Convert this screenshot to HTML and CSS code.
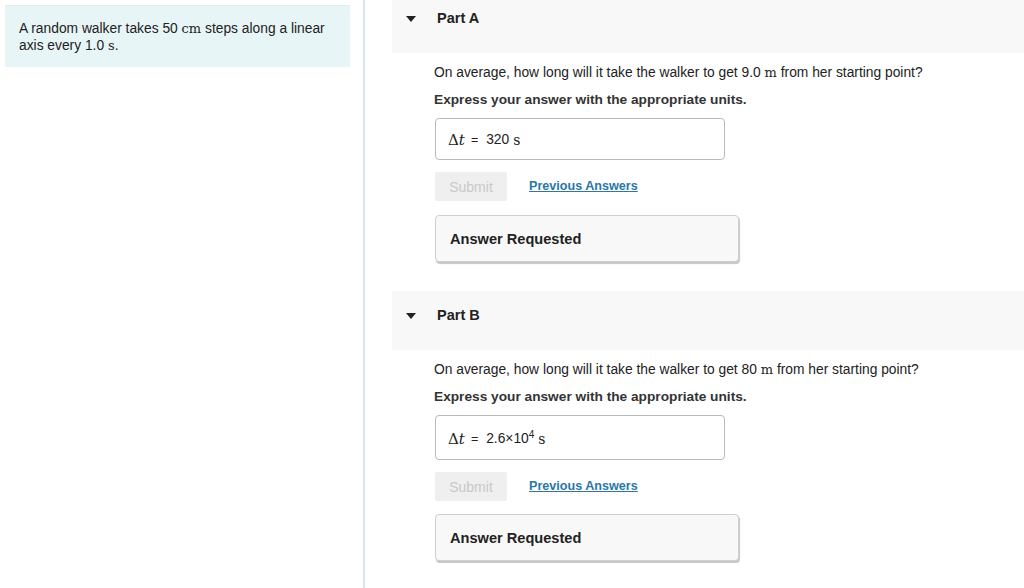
FILE: index.html
```html
<!DOCTYPE html>
<html>
<head>
<meta charset="utf-8">
<link rel="stylesheet" href="styles.css">
</head>
<body>
<div class="page">
  <aside class="left">
    <div class="intro">A random walker takes 50 <span class="mu">cm</span> steps along a linear axis every 1.0 <span class="mu">s</span>.</div>
  </aside>
  <div class="divider"></div>
  <main class="right">
    <section class="part first">
      <div class="part-head">
        <span class="tri"></span>
        <span class="part-title">Part A</span>
      </div>
      <div class="part-body">
        <p class="q">On average, how long will it take the walker to get 9.0 <span class="mu">m</span> from her starting point?</p>
        <p class="instr">Express your answer with the appropriate units.</p>
        <div class="answer-box">
          <span class="delta">Δ<i>t</i></span><span class="eq">=</span><span class="val">320</span><span class="unit">s</span>
        </div>
        <div class="actions">
          <span class="submit">Submit</span>
          <a class="prev">Previous Answers</a>
        </div>
        <div class="requested">Answer Requested</div>
      </div>
    </section>
    <section class="part">
      <div class="part-head">
        <span class="tri"></span>
        <span class="part-title">Part B</span>
      </div>
      <div class="part-body">
        <p class="q">On average, how long will it take the walker to get 80 <span class="mu">m</span> from her starting point?</p>
        <p class="instr">Express your answer with the appropriate units.</p>
        <div class="answer-box tall">
          <span class="delta">Δ<i>t</i></span><span class="eq">=</span><span class="val">2.6×10<sup>4</sup></span><span class="unit">s</span>
        </div>
        <div class="actions">
          <span class="submit">Submit</span>
          <a class="prev">Previous Answers</a>
        </div>
        <div class="requested last">Answer Requested</div>
      </div>
    </section>
  </main>
</div>
</body>
</html>
```
FILE: styles.css
```css
html, body {
  margin: 0;
  padding: 0;
  background: #fff;
}
body {
  font-family: "Liberation Sans", Arial, sans-serif;
  color: #222;
  font-size: 13.8px;
  overflow: hidden;
}
.page {
  display: flex;
  height: 588px;
}
.left {
  width: 363px;
  flex: none;
  padding: 5px 13px 0 5px;
  box-sizing: border-box;
}
.intro {
  background: #e8f5f6;
  border-top: 1px solid #e4eaeb;
  height: 62px;
  box-sizing: border-box;
  padding: 14px 14px 0 14px;
  line-height: 17px;
  font-size: 13.8px;
  color: #222;
}
.mu {
  font-family: "DejaVu Serif", "Liberation Serif", serif;
  font-size: 13px;
}
.divider {
  width: 2px;
  flex: none;
  background: #dde3ec;
}
.right {
  flex: 1;
  padding-left: 27px;
}
.part.first {
  margin-top: -6px;
}
.part-head {
  background: #f8f8f8;
  height: 59px;
  display: flex;
  align-items: flex-start;
  padding-top: 16px;
  box-sizing: border-box;
}
.tri {
  width: 0;
  height: 0;
  border-left: 5px solid transparent;
  border-right: 5px solid transparent;
  border-top: 6px solid #222;
  margin: 6px 0 0 14px;
}
.part-title {
  font-weight: bold;
  font-size: 14.5px;
  margin-left: 21px;
  line-height: 17px;
  color: #222;
}
.part-body {
  padding: 11px 0 29px 42px;
}
.q {
  margin: 0;
  line-height: 17px;
  font-size: 13.8px;
  color: #222;
}
.instr {
  margin: 10px 0 0 0;
  line-height: 17px;
  font-weight: bold;
  font-size: 13.7px;
  color: #333;
}
.answer-box {
  margin-top: 10px;
  margin-left: 1px;
  width: 290px;
  height: 42px;
  box-sizing: border-box;
  border: 1px solid #b9b9b9;
  border-radius: 4px;
  display: flex;
  align-items: center;
  padding-left: 12px;
  padding-top: 1px;
}
.answer-box.tall {
  height: 45px;
  padding-top: 2px;
}
.delta {
  font-family: "DejaVu Serif", "Liberation Serif", serif;
  font-size: 15px;
}
.delta i {
  font-style: italic;
}
.eq {
  margin: 0 8px 0 6px;
  font-size: 12.5px;
}
.val {
  font-size: 13.8px;
}
.val sup {
  font-size: 10px;
  vertical-align: 5px;
  line-height: 0;
}
.unit {
  font-family: "DejaVu Serif", "Liberation Serif", serif;
  font-size: 14px;
  margin-left: 4px;
}
.actions {
  display: flex;
  align-items: center;
  margin-top: 12px;
  margin-left: 1px;
}
.submit {
  width: 72px;
  height: 29px;
  background: #efefef;
  border-radius: 2px;
  color: #c8c8c8;
  font-size: 14px;
  display: flex;
  align-items: center;
  justify-content: center;
}
.prev {
  margin-left: 22px;
  color: #2a77a8;
  font-weight: bold;
  font-size: 12.6px;
  text-decoration: underline;
  margin-top: -2px;
}
.requested {
  margin-top: 14px;
  margin-left: 1px;
  width: 304px;
  height: 47px;
  box-sizing: border-box;
  background: #f8f8f8;
  border: 1px solid #cfcfcf;
  border-radius: 4px;
  box-shadow: 1px 2px 1px #c6c6c6;
  font-weight: bold;
  font-size: 14.6px;
  color: #222;
  display: flex;
  align-items: center;
  padding-left: 14px;
}
.requested.last {
  margin-top: 13px;
}
```
